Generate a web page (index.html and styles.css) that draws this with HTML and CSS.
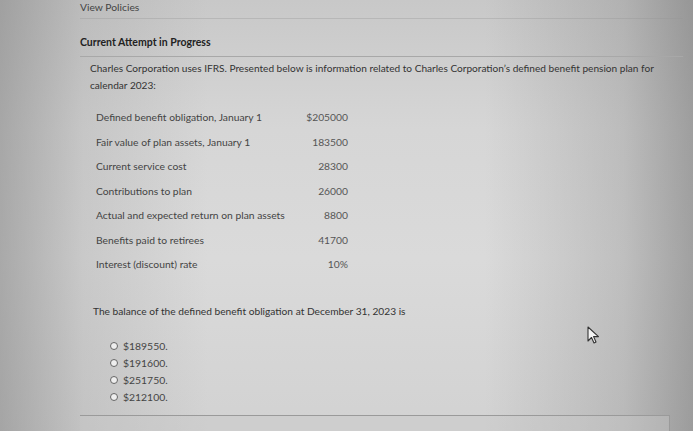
FILE: index.html
```html
<!DOCTYPE html>
<html>
<head>
<meta charset="utf-8">
<link rel="stylesheet" href="styles.css">
</head>
<body>
<div class="screen">
  <div class="content">
    <div class="topbar">View Policies</div>
    <div class="attempt">Current Attempt in Progress</div>
    <div class="question">
      <p class="intro">Charles Corporation uses IFRS. Presented below is information related to Charles Corporation’s defined benefit pension plan for calendar 2023:</p>
      <div class="data">
        <div class="row"><span class="label">Defined benefit obligation, January 1</span><span class="value">$205000</span></div>
        <div class="row"><span class="label">Fair value of plan assets, January 1</span><span class="value">183500</span></div>
        <div class="row"><span class="label">Current service cost</span><span class="value">28300</span></div>
        <div class="row"><span class="label">Contributions to plan</span><span class="value">26000</span></div>
        <div class="row"><span class="label">Actual and expected return on plan assets</span><span class="value">8800</span></div>
        <div class="row"><span class="label">Benefits paid to retirees</span><span class="value">41700</span></div>
        <div class="row"><span class="label">Interest (discount) rate</span><span class="value">10%</span></div>
      </div>
      <p class="prompt">The balance of the defined benefit obligation at December 31, 2023 is</p>
      <div class="options">
        <label class="option"><span class="radio"></span>$189550.</label>
        <label class="option"><span class="radio"></span>$191600.</label>
        <label class="option"><span class="radio"></span>$251750.</label>
        <label class="option"><span class="radio"></span>$212100.</label>
      </div>
    </div>
    <div class="nextbox"></div>
  </div>
  <svg class="cursor" width="14" height="20" viewBox="0 0 14 20"><path d="M1 1 L1 15 L4.5 11.5 L7 17 L9 16 L6.6 10.6 L11.5 10.6 Z" fill="#f4f4f4" stroke="#333" stroke-width="1.1" stroke-linejoin="round"/></svg>
</div>
</body>
</html>
```
FILE: styles.css
```css
html, body {
  margin: 0;
  padding: 0;
}
body {
  width: 693px;
  height: 431px;
  overflow: hidden;
  font-family: Lato, "Open Sans", sans-serif;
  color: #3a3a3a;
}
.screen {
  position: relative;
  width: 693px;
  height: 431px;
  background:
    linear-gradient(90deg, rgba(120,120,120,0.5) 0%, rgba(150,150,150,0.25) 12%, rgba(255,255,255,0) 30%, rgba(255,255,255,0) 70%, rgba(110,110,110,0.25) 90%, rgba(90,90,90,0.45) 100%),
    linear-gradient(180deg, #c8c8c8 0%, #d6d6d6 30%, #dadada 60%, #d2d2d2 100%);
}
.content {
  margin-left: 80px;
  width: 603px;
  height: 431px;
  display: flex;
  flex-direction: column;
}
.topbar {
  height: 18px;
  font-size: 10.3px;
  line-height: 14px;
  color: #444;
  border-bottom: 1px solid rgba(150,150,150,0.35);
}
.attempt {
  margin-top: 15px;
  height: 22px;
  font-size: 10.5px;
  font-weight: bold;
  line-height: 16px;
  color: #222;
  border-bottom: 1px solid #a8a8a8;
}
.question {
  padding-left: 10px;
}
.intro {
  margin: 3px 0 0;
  font-size: 10.1px;
  line-height: 17px;
  width: 585px;
  color: #333;
}
.data {
  margin-top: 16px;
  margin-left: 6px;
  width: 252px;
  display: flex;
  flex-direction: column;
}
.row {
  display: flex;
  justify-content: space-between;
  height: 24.5px;
  font-size: 10.3px;
  line-height: 14px;
  color: #444;
}
.value {
  color: #555;
}
.prompt {
  margin: 22px 0 0 3px;
  font-size: 10.2px;
  line-height: 14px;
  color: #333;
}
.options {
  margin-top: 20px;
  margin-left: 20px;
  display: flex;
  flex-direction: column;
}
.option {
  display: flex;
  align-items: center;
  gap: 5px;
  height: 17px;
  font-size: 10.4px;
  color: #444;
}
.radio {
  width: 6px;
  height: 6px;
  border: 1px solid #666;
  border-radius: 50%;
  background: #eee;
}
.nextbox {
  margin-top: auto;
  margin-right: 13px;
  height: 15px;
  border-top: 1px solid #9a9a9a;
  border-right: 1px solid #9a9a9a;
  background: rgba(200,200,200,0.4);
}
.cursor {
  position: absolute;
  left: 587px;
  top: 326px;
}
```
